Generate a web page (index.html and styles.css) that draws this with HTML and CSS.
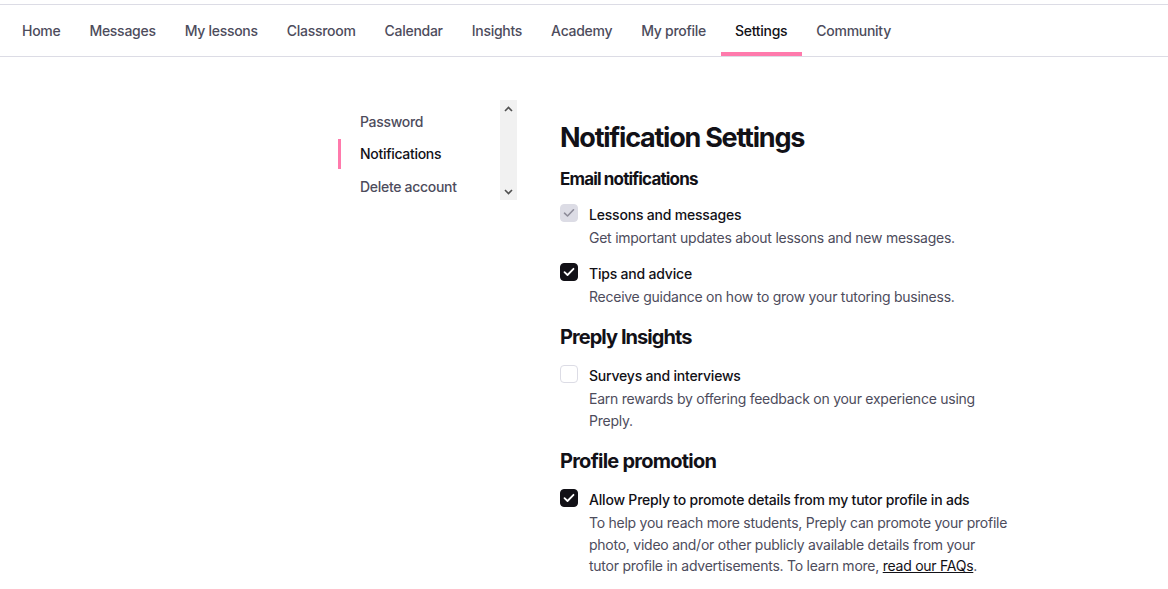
FILE: index.html
```html
<!DOCTYPE html>
<html lang="en">
<head>
<meta charset="utf-8">
<title>Settings – Notifications</title>
<link rel="stylesheet" href="styles.css">
</head>
<body>
<header class="topbar">
  <nav class="nav">
    <a class="nav-item" href="#">Home</a>
    <a class="nav-item" href="#">Messages</a>
    <a class="nav-item" href="#">My lessons</a>
    <a class="nav-item" href="#">Classroom</a>
    <a class="nav-item" href="#">Calendar</a>
    <a class="nav-item" href="#">Insights</a>
    <a class="nav-item" href="#">Academy</a>
    <a class="nav-item" href="#">My profile</a>
    <a class="nav-item is-active" href="#">Settings</a>
    <a class="nav-item" href="#">Community</a>
  </nav>
</header>

<div class="page">
  <aside class="sidebar">
    <ul class="side-list">
      <li class="side-item">Password</li>
      <li class="side-item is-active">Notifications</li>
      <li class="side-item">Delete account</li>
    </ul>
    <div class="scrollbar">
      <svg class="sb-arrow" width="9" height="6" viewBox="0 0 9 6"><path d="M1 5 L4.5 1.5 L8 5" fill="none" stroke="#505050" stroke-width="1.6"/></svg>
      <svg class="sb-arrow" width="9" height="6" viewBox="0 0 9 6"><path d="M1 1 L4.5 4.5 L8 1" fill="none" stroke="#505050" stroke-width="1.6"/></svg>
    </div>
  </aside>

  <main class="content">
    <h1 class="title">Notification Settings</h1>

    <h2 class="section-title small">Email notifications</h2>
    <div class="option">
      <span class="box is-disabled"><svg width="12" height="10" viewBox="0 0 12 10"><path d="M1.5 5.2 L4.5 8 L10.5 1.8" fill="none" stroke="#8d8c99" stroke-width="1.6" stroke-linecap="round" stroke-linejoin="round"/></svg></span>
      <div class="option-text">
        <div class="option-label">Lessons and messages</div>
        <p class="option-desc">Get important updates about lessons and new messages.</p>
      </div>
    </div>
    <div class="option">
      <span class="box is-checked"><svg width="12" height="10" viewBox="0 0 12 10"><path d="M1.5 5.2 L4.5 8 L10.5 1.8" fill="none" stroke="#ffffff" stroke-width="1.8" stroke-linecap="round" stroke-linejoin="round"/></svg></span>
      <div class="option-text">
        <div class="option-label">Tips and advice</div>
        <p class="option-desc">Receive guidance on how to grow your tutoring business.</p>
      </div>
    </div>

    <h2 class="section-title">Preply Insights</h2>
    <div class="option">
      <span class="box"></span>
      <div class="option-text">
        <div class="option-label">Surveys and interviews</div>
        <p class="option-desc">Earn rewards by offering feedback on your experience using Preply.</p>
      </div>
    </div>

    <h2 class="section-title wide">Profile promotion</h2>
    <div class="option">
      <span class="box is-checked"><svg width="12" height="10" viewBox="0 0 12 10"><path d="M1.5 5.2 L4.5 8 L10.5 1.8" fill="none" stroke="#ffffff" stroke-width="1.8" stroke-linecap="round" stroke-linejoin="round"/></svg></span>
      <div class="option-text">
        <div class="option-label">Allow Preply to promote details from my tutor profile in ads</div>
        <p class="option-desc">To help you reach more students, Preply can promote your profile photo, video and/or other publicly available details from your tutor profile in advertisements. To learn more, <a class="link" href="#">read our FAQs</a>.</p>
      </div>
    </div>
  </main>
</div>
</body>
</html>
```

FILE: styles.css
```css
* { box-sizing: border-box; }

html, body {
  margin: 0;
  padding: 0;
  background: #ffffff;
}

body {
  font-family: Inter, "Noto Sans", "Liberation Sans", sans-serif;
  color: #121117;
  font-size: 14px;
}

.topbar {
  margin-top: 4px;
  border-top: 1px solid #dcdce5;
  border-bottom: 1px solid #dcdce5;
}

.nav {
  display: flex;
  height: 51px;
  padding-left: 7.5px;
}

.nav-item {
  position: relative;
  display: flex;
  align-items: center;
  padding: 0 14.5px;
  font-size: 14px;
  font-weight: 500;
  color: #4d4c5c;
  text-decoration: none;
  letter-spacing: -0.28px;
}

.nav-item.is-active {
  color: #121117;
}

.nav-item.is-active::after {
  content: "";
  position: absolute;
  left: 0;
  right: 0;
  bottom: 0;
  height: 4px;
  background: #ff7aac;
}

.page {
  display: flex;
  align-items: flex-start;
  padding-left: 338px;
}

.sidebar {
  display: flex;
  width: 179px;
  height: 100px;
  margin-top: 43px;
  margin-right: 43px;
}

.side-list {
  list-style: none;
  margin: 0;
  padding: 5px 0 0;
  flex: 1;
}

.side-item {
  position: relative;
  height: 32.5px;
  display: flex;
  align-items: center;
  padding-left: 22px;
  font-size: 14px;
  font-weight: 500;
  color: #4d4c5c;
  letter-spacing: -0.3px;
}

.side-item.is-active {
  color: #121117;
}

.side-item.is-active::before {
  content: "";
  position: absolute;
  left: 0;
  top: 1px;
  bottom: 1px;
  width: 3px;
  background: #ff7aac;
}

.scrollbar {
  width: 17px;
  background: #f1f1f1;
  display: flex;
  flex-direction: column;
  justify-content: space-between;
  align-items: center;
  padding: 6px 0 5px;
}

.content {
  width: 455px;
  padding-top: 63px;
}

.title {
  margin: 0;
  font-size: 27px;
  line-height: 36px;
  font-weight: 700;
  letter-spacing: -1.25px;
}

.section-title {
  margin: 16px 0 0;
  font-size: 20px;
  line-height: 28px;
  font-weight: 700;
  letter-spacing: -0.95px;
}

.section-title.wide {
  letter-spacing: -0.75px;
}

.section-title.small {
  margin-top: 11px;
  font-size: 17px;
  line-height: 24px;
  letter-spacing: -0.85px;
}

.option {
  display: flex;
  align-items: flex-start;
  gap: 11px;
  margin-top: 14px;
}

.section-title + .option {
  margin-top: 14px;
}

.section-title.small + .option {
  margin-top: 13px;
}

.box {
  flex: none;
  width: 18px;
  height: 18px;
  border-radius: 4px;
  border: 1px solid #dcdce5;
  background: #ffffff;
  display: flex;
  align-items: center;
  justify-content: center;
}

.box.is-checked {
  background: #121117;
  border-color: #121117;
}

.box.is-disabled {
  background: #dcdce5;
  border-color: #dcdce5;
}

.option-text {
  flex: none;
  width: 419px;
  padding-top: 1px;
}

.option-label {
  font-size: 14px;
  line-height: 20px;
  font-weight: 500;
  color: #121117;
  letter-spacing: -0.2px;
}

.option-desc {
  margin: 2px 0 0;
  font-size: 14px;
  line-height: 21.5px;
  color: #4d4c5c;
  letter-spacing: -0.25px;
}

.link {
  color: #121117;
  text-decoration: underline;
}
```
